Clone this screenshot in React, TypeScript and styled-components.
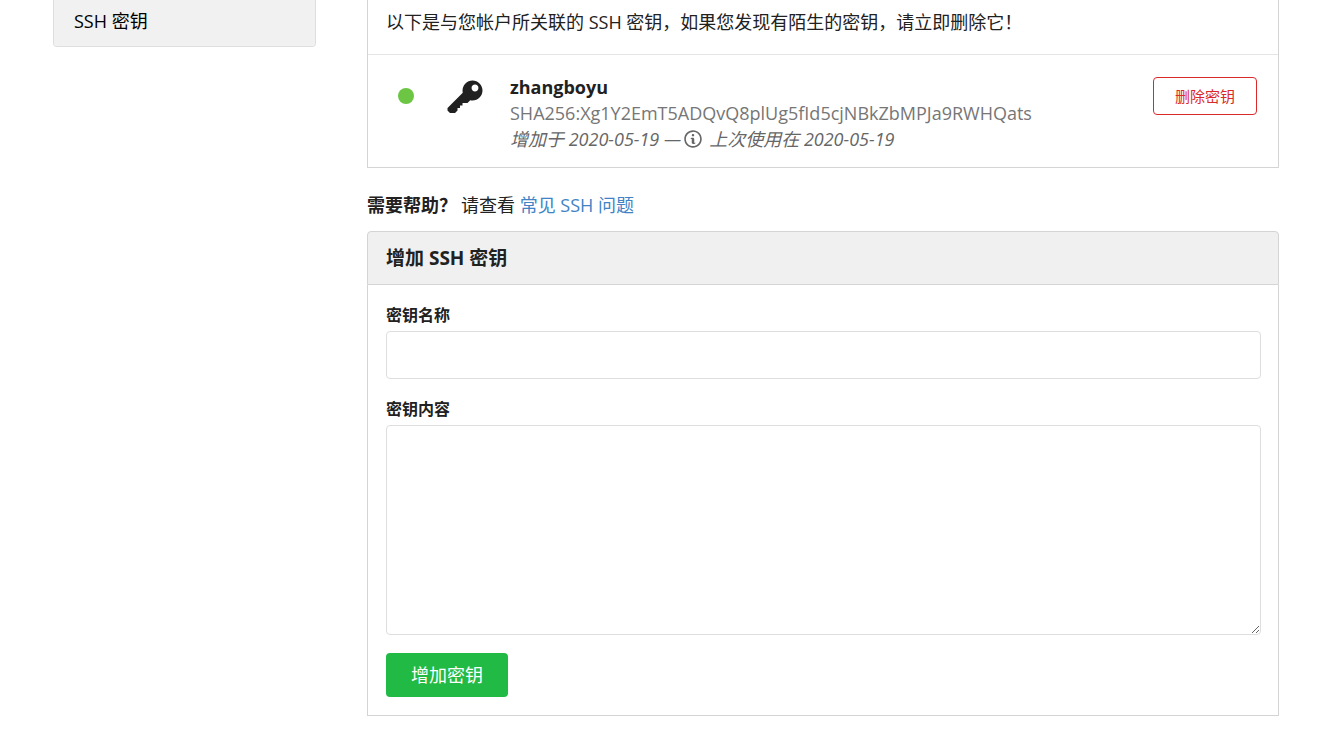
import React from 'react';
import styled, { createGlobalStyle } from 'styled-components';

const GlobalStyle = createGlobalStyle`
  *, *::before, *::after { box-sizing: border-box; }
  body {
    margin: 0;
    background: #fff;
    color: #212121;
    font-family: "Open Sans", "Noto Sans CJK SC", sans-serif;
    font-size: 18px;
    line-height: 26px;
  }
  button, input, textarea { font-family: inherit; }
`;

const Page = styled.div`
  display: grid;
  grid-template-columns: 263fr 912fr;
  column-gap: 51px;
  align-items: start;
  padding: 0 62px 32px 53px;
`;

const Menu = styled.nav`
  border: 1px solid #dededf;
  border-top: 0;
  border-radius: 0 0 4px 4px;
  overflow: hidden;
`;

const MenuLink = styled.a`
  display: block;
  padding: 8px 20px 12px;
  background: #f1f1f1;
  color: #000;
  text-decoration: none;
`;

const Panel = styled.section`
  border: 1px solid #d4d4d5;
  border-top: 0;
`;

const Intro = styled.p`
  margin: 0;
  padding: 9px 18px 19px;
  border-bottom: 1px solid #e5e5e5;
`;

const KeyRow = styled.div`
  display: flex;
  align-items: flex-start;
  padding: 19px 21px 15px 30px;
`;

const StatusDot = styled.span`
  width: 16px;
  height: 16px;
  margin: 14px 33px 0 0;
  border-radius: 50%;
  background: #6cc644;
`;

const KeyIcon = styled.svg`
  width: 36px;
  height: 40px;
  margin: 4px 27px 0 0;
  fill: #212121;
`;

const KeyText = styled.div`
  flex: 1;
  color: #767676;
`;

const KeyName = styled.strong`
  display: block;
  color: #212121;
`;

const Activity = styled.div`
  display: flex;
  align-items: center;
  gap: 3px;
  color: #666;
  font-style: italic;
`;

const InfoIcon = styled.svg`
  width: 18px;
  height: 20px;
  margin-right: 4px;
  fill: #666;
`;

const DeleteButton = styled.button`
  height: 38px;
  margin-top: 3px;
  padding: 0 21px 2px;
  border: 1px solid #db2828;
  border-radius: 4px;
  background: #fff;
  color: #db2828;
  font-size: 15px;
`;

const Help = styled.p`
  margin: 24px 0 13px;
`;

const HelpTitle = styled.strong`
  margin-right: 4px;
`;

const HelpLink = styled.a`
  color: #4183c4;
  text-decoration: none;
`;

const PanelHeader = styled.h4`
  margin: 0;
  padding: 13px 18px;
  border: 1px solid #d4d4d5;
  border-radius: 4px 4px 0 0;
  background: #f0f0f0;
  font-size: 19px;
  font-weight: 700;
  line-height: 26px;
`;

const Form = styled.form`
  padding: 18px 17px 18px 18px;
  border: 1px solid #d4d4d5;
  border-top: 0;
`;

const Field = styled.div`
  margin-bottom: 18px;
`;

const Label = styled.label`
  display: block;
  margin-bottom: 4px;
  font-size: 16px;
  font-weight: 700;
  line-height: 24px;
`;

const Input = styled.input`
  display: block;
  width: 100%;
  height: 48px;
  padding: 0 16px;
  border: 1px solid #dededf;
  border-radius: 4px;
  font-size: 18px;
`;

const TextArea = styled.textarea`
  display: block;
  width: 100%;
  height: 210px;
  padding: 12px 16px;
  border: 1px solid #dededf;
  border-radius: 4px;
  font-size: 18px;
  resize: vertical;
`;

const AddButton = styled.button`
  display: block;
  height: 44px;
  padding: 0 25px 2px;
  border: 0;
  border-radius: 4px;
  background: #21ba45;
  color: #fff;
  font-size: 18px;
`;

export default function App() {
  return (
    <>
      <GlobalStyle />
      <Page>
        <Menu>
          <MenuLink href="#keys">SSH 密钥</MenuLink>
        </Menu>
        <main>
          <Panel id="keys">
            <Intro>以下是与您帐户所关联的 SSH 密钥，如果您发现有陌生的密钥，请立即删除它！</Intro>
            <KeyRow>
              <StatusDot />
              <KeyIcon viewBox="0 0 14 16" aria-hidden="true">
                <path fillRule="evenodd" d="M12.83 2.17C12.08 1.42 11.14 1.03 10 1c-1.13.03-2.08.42-2.83 1.17S6.04 3.86 6.01 5c0 .3.03.59.09.89L0 12v1l1 1h2l1-1v-1h1v-1h1v-1h2l1.09-1.11c.3.08.59.11.91.11 1.14-.03 2.08-.42 2.83-1.17S13.97 6.14 14 5c-.03-1.14-.42-2.08-1.17-2.83zM11 5.38c-.77 0-1.38-.61-1.38-1.38 0-.77.61-1.38 1.38-1.38.77 0 1.38.61 1.38 1.38 0 .77-.61 1.38-1.38 1.38z" />
              </KeyIcon>
              <KeyText>
                <KeyName>zhangboyu</KeyName>
                <div>SHA256:Xg1Y2EmT5ADQvQ8plUg5fId5cjNBkZbMPJa9RWHQats</div>
                <Activity>
                  <span>增加于 2020-05-19 —</span>
                  <InfoIcon viewBox="0 0 14 16" aria-hidden="true">
                    <path fillRule="evenodd" d="M6.3 5.69a.942.942 0 01-.28-.7c0-.28.09-.52.28-.7.19-.18.42-.28.7-.28.28 0 .52.09.7.28.18.19.28.42.28.7 0 .28-.09.52-.28.7a1 1 0 01-.7.3c-.28 0-.52-.11-.7-.3zM8 7.99c-.02-.25-.11-.48-.31-.69-.2-.19-.42-.3-.69-.31H6c-.27.02-.48.13-.69.31-.2.2-.3.44-.31.69h1v3c.02.27.11.5.31.69.2.2.42.31.69.31h1c.27 0 .48-.11.69-.31.2-.19.3-.42.31-.69H8V7.98v.01zM7 2.3c-3.14 0-5.7 2.54-5.7 5.68 0 3.14 2.56 5.7 5.7 5.7s5.7-2.55 5.7-5.7c0-3.15-2.56-5.69-5.7-5.69v.01zM7 .98c3.86 0 7 3.14 7 7s-3.14 7-7 7-7-3.12-7-7 3.14-7 7-7z" />
                  </InfoIcon>
                  <span>上次使用在 2020-05-19</span>
                </Activity>
              </KeyText>
              <DeleteButton type="button">删除密钥</DeleteButton>
            </KeyRow>
          </Panel>
          <Help>
            <HelpTitle>需要帮助？</HelpTitle>
            请查看 <HelpLink href="#help">常见 SSH 问题</HelpLink>
          </Help>
          <PanelHeader>增加 SSH 密钥</PanelHeader>
          <Form>
            <Field>
              <Label htmlFor="title">密钥名称</Label>
              <Input id="title" type="text" />
            </Field>
            <Field>
              <Label htmlFor="content">密钥内容</Label>
              <TextArea id="content" />
            </Field>
            <AddButton type="button">增加密钥</AddButton>
          </Form>
        </main>
      </Page>
    </>
  );
}
